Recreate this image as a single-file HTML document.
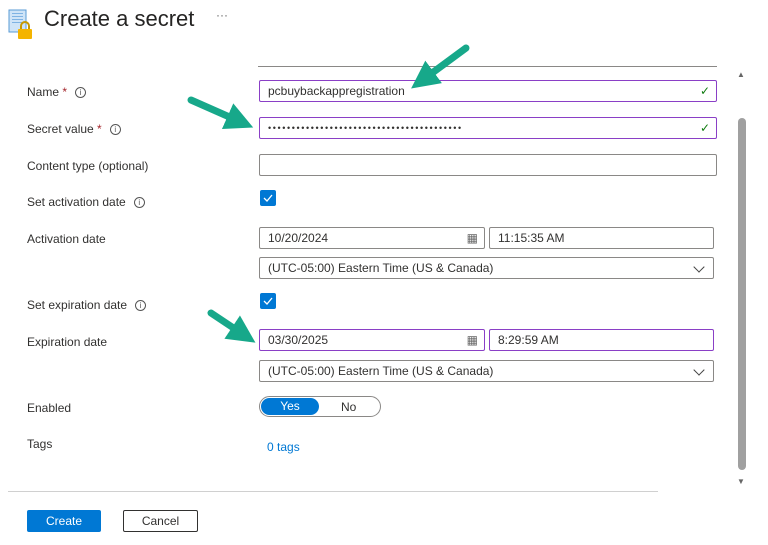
<!DOCTYPE html>
<html><head><style>
*{box-sizing:border-box;margin:0;padding:0}
body{width:768px;height:545px;background:#fff;font-family:"Liberation Sans",sans-serif;font-size:12px;color:#323130;position:relative;overflow:hidden}
.a{position:absolute}
.lbl{position:absolute;left:27px;font-size:12px;color:#323130}
.req{color:#a4262c}
.info{display:inline-block;width:11px;height:11px;border:1px solid #555;border-radius:50%;font-size:8px;text-align:center;line-height:9px;margin-left:8px;vertical-align:1px;color:#555}
.inp{position:absolute;height:22px;border:1px solid #8a8886;border-radius:2px;padding-left:8px;line-height:20px;font-size:12px;color:#323130}
.pur{border-color:#8a3fc6}
.chk{position:absolute;width:16px;height:16px;background:#0078d4;border-radius:2px}
.chev{position:absolute;right:10px;top:5px;width:8px;height:8px;border-right:1.5px solid #444;border-bottom:1.5px solid #444;transform:rotate(45deg)}
</style></head><body>
<svg class="a" style="left:8px;top:8px" width="28" height="32" viewBox="0 0 28 32">
<rect x="1" y="2" width="17" height="22" fill="#cfe4f7" stroke="#5a9bd6"/>
<g fill="#7fb3e3"><rect x="4" y="5" width="11" height="1"/><rect x="4" y="8" width="11" height="1"/><rect x="4" y="11" width="11" height="1"/><rect x="4" y="14" width="11" height="1"/></g>
<path d="M13 22v-4a4 4 0 0 1 8 0v4" fill="none" stroke="#c79a00" stroke-width="2"/>
<rect x="10" y="21" width="14" height="10" rx="1" fill="#f4b400"/>
</svg>
<div class="a" style="left:44px;top:6px;font-size:22px;color:#252423">Create a secret</div>
<div class="a" style="left:216px;top:8px;font-size:12px;color:#666">···</div>
<div class="a" style="left:258px;top:66px;width:459px;height:1px;background:#8a8886"></div>

<div class="lbl" style="top:85px">Name <span class="req">*</span><span class="info">i</span></div>
<div class="inp pur" style="left:259px;top:80px;width:458px">pcbuybackappregistration<span class="a" style="right:6px;top:0;color:#107c10">✓</span></div>
<div class="lbl" style="top:122px">Secret value <span class="req">*</span><span class="info">i</span></div>
<div class="inp pur" style="left:259px;top:117px;width:458px;font-size:9px;letter-spacing:1.6px">•••••••••••••••••••••••••••••••••••••••••<span class="a" style="right:6px;top:0;color:#107c10;font-size:12px;letter-spacing:0">✓</span></div>
<div class="lbl" style="top:159px">Content type (optional)</div>
<div class="inp" style="left:259px;top:154px;width:458px"></div>
<div class="lbl" style="top:195px">Set activation date<span class="info">i</span></div>
<div class="chk" style="left:260px;top:190px"><svg width="16" height="16"><path d="M4 8l3 3 5-6" stroke="#fff" stroke-width="1.3" fill="none"/></svg></div>
<div class="lbl" style="top:232px">Activation date</div>
<div class="inp" style="left:259px;top:227px;width:226px">10/20/2024<span class="a" style="right:6px;top:0;color:#666">▦</span></div>
<div class="inp" style="left:489px;top:227px;width:225px">11:15:35 AM</div>
<div class="inp" style="left:259px;top:257px;width:455px">(UTC-05:00) Eastern Time (US &amp; Canada)<span class="chev"></span></div>
<div class="lbl" style="top:298px">Set expiration date<span class="info">i</span></div>
<div class="chk" style="left:260px;top:293px"><svg width="16" height="16"><path d="M4 8l3 3 5-6" stroke="#fff" stroke-width="1.3" fill="none"/></svg></div>
<div class="lbl" style="top:335px">Expiration date</div>
<div class="inp pur" style="left:259px;top:329px;width:226px">03/30/2025<span class="a" style="right:6px;top:0;color:#666">▦</span></div>
<div class="inp pur" style="left:489px;top:329px;width:225px">8:29:59 AM</div>
<div class="inp" style="left:259px;top:360px;width:455px">(UTC-05:00) Eastern Time (US &amp; Canada)<span class="chev"></span></div>
<div class="lbl" style="top:401px">Enabled</div>
<div class="a" style="left:259px;top:396px;width:122px;height:21px;border:1px solid #8a8886;border-radius:11px"></div>
<div class="a" style="left:261px;top:398px;width:58px;height:17px;background:#0078d4;border-radius:9px;color:#fff;text-align:center;line-height:17px">Yes</div>
<div class="a" style="left:341px;top:400px">No</div>
<div class="lbl" style="top:437px">Tags</div>
<div class="a" style="left:267px;top:440px;color:#0078d4">0 tags</div>
<div class="a" style="left:737px;top:70px;font-size:8px;color:#666">▲</div>
<div class="a" style="left:738px;top:118px;width:8px;height:352px;background:#a0a0a0;border-radius:4px"></div>
<div class="a" style="left:737px;top:477px;font-size:8px;color:#666">▼</div>
<div class="a" style="left:8px;top:491px;width:650px;height:1px;background:#d0d0d0"></div>
<div class="a" style="left:27px;top:510px;width:74px;height:22px;background:#0078d4;color:#fff;text-align:center;line-height:22px;border-radius:2px">Create</div>
<div class="a" style="left:123px;top:510px;width:75px;height:22px;border:1px solid #323130;text-align:center;line-height:20px;border-radius:2px">Cancel</div>
<svg class="a" style="left:0;top:0" width="768" height="545">
<defs><marker id="h" markerWidth="4" markerHeight="4" refX="1" refY="2" orient="auto"><path d="M0 0L4 2L0 4z" fill="#17a88a"/></marker></defs>
<g stroke="#17a88a" stroke-width="7" stroke-linecap="round" marker-end="url(#h)">
<line x1="466" y1="48" x2="428" y2="76"/>
<line x1="191" y1="100" x2="234" y2="119"/>
<line x1="211" y1="313" x2="238" y2="331"/>
</g></svg>
</body></html>
